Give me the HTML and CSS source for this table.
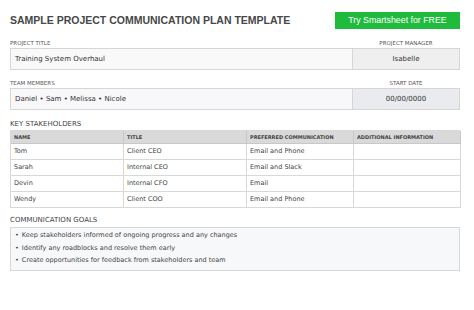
FILE: index.html
```html
<!DOCTYPE html>
<html>
<head>
<meta charset="utf-8">
<link rel="stylesheet" href="styles.css">
</head>
<body>
<div class="page">
  <div class="header">
    <h1 class="title">SAMPLE PROJECT COMMUNICATION PLAN TEMPLATE</h1>
    <div class="cta">Try Smartsheet for FREE</div>
  </div>

  <div class="info info-first">
    <div class="label">PROJECT TITLE</div>
    <div class="label label-right">PROJECT MANAGER</div>
    <div class="field field-left">Training System Overhaul</div>
    <div class="field field-right field-gray">Isabelle</div>
  </div>

  <div class="info">
    <div class="label">TEAM MEMBERS</div>
    <div class="label label-right">START DATE</div>
    <div class="field field-left field-soft">Daniel • Sam • Melissa • Nicole</div>
    <div class="field field-right field-blue">00/00/0000</div>
  </div>

  <div class="section-label">KEY STAKEHOLDERS</div>
  <div class="table">
    <div class="th">NAME</div><div class="th">TITLE</div><div class="th">PREFERRED COMMUNICATION</div><div class="th">ADDITIONAL INFORMATION</div>
    <div class="td">Tom</div><div class="td">Client CEO</div><div class="td">Email and Phone</div><div class="td"></div>
    <div class="td">Sarah</div><div class="td">Internal CEO</div><div class="td">Email and Slack</div><div class="td"></div>
    <div class="td">Devin</div><div class="td">Internal CFO</div><div class="td">Email</div><div class="td"></div>
    <div class="td">Wendy</div><div class="td">Client COO</div><div class="td">Email and Phone</div><div class="td"></div>
  </div>

  <div class="section-label goals-label">COMMUNICATION GOALS</div>
  <ul class="goals">
    <li>Keep stakeholders informed of ongoing progress and any changes</li>
    <li>Identify any roadblocks and resolve them early</li>
    <li>Create opportunities for feedback from stakeholders and team</li>
  </ul>
</div>
</body>
</html>
```

FILE: styles.css
```css
html, body {
  margin: 0;
  padding: 0;
  background: #ffffff;
}

.page {
  width: 450px;
  padding: 12px 0 0 10px;
  font-family: "DejaVu Sans", "Liberation Sans", sans-serif;
  color: #3a3a3a;
}

.header {
  display: flex;
  justify-content: space-between;
  align-items: center;
  height: 17px;
}

.title {
  margin: 0;
  font-family: "Liberation Sans", Arial, sans-serif;
  font-size: 10.5px;
  font-weight: bold;
  color: #474747;
  white-space: nowrap;
  line-height: 17px;
}

.cta {
  width: 125px;
  height: 17px;
  background: #1fbb3c;
  color: #ffffff;
  font-family: "Liberation Sans", Arial, sans-serif;
  font-size: 8.8px;
  line-height: 17px;
  text-align: center;
}

.info {
  display: grid;
  grid-template-columns: 342px 108px;
  grid-template-rows: 8px 22px;
  row-gap: 1px;
  margin-top: 9px;
}

.info-first {
  margin-top: 10px;
}

.label {
  font-size: 5.5px;
  color: #555;
  line-height: 8px;
  align-self: end;
}

.label-right {
  text-align: center;
}

.field {
  box-sizing: border-box;
  border: 1px solid #d6d6d6;
  font-size: 7px;
  line-height: 20px;
  color: #333;
  background: #f9f9f9;
}

.field-left {
  padding-left: 4px;
  border-right: none;
}

.field-right {
  text-align: center;
}

.field-gray {
  background: #efefef;
}

.field-soft {
  background: #f8f8fa;
}

.field-blue {
  background: #e9ebef;
}

.section-label {
  margin-top: 10px;
  font-size: 7px;
  line-height: 9px;
  color: #444;
}

.table {
  display: grid;
  grid-template-columns: 113px 123px 107px 107px;
  grid-template-rows: 13px repeat(4, 16px);
  margin-top: 1px;
  border-left: 1px solid #d8d8d8;
  border-top: 1px solid #d8d8d8;
}

.th, .td {
  box-sizing: border-box;
  border-right: 1px solid #d8d8d8;
  border-bottom: 1px solid #d8d8d8;
  padding-left: 3px;
  white-space: nowrap;
  overflow: hidden;
}

.th {
  background: #d9d9d9;
  font-size: 5px;
  font-weight: bold;
  color: #444;
  line-height: 12px;
  border-color: #c8c8c8;
}

.td {
  font-size: 6.5px;
  line-height: 15px;
  color: #444;
  background: #ffffff;
}

.goals-label {
  margin-top: 8px;
}

.goals {
  box-sizing: border-box;
  list-style: none;
  margin: 2px 0 0 0;
  padding: 1px 0 0 4px;
  height: 44px;
  border: 1px solid #d8d8d8;
  background: #f7f8fa;
  font-size: 6.5px;
  line-height: 12.5px;
  color: #444;
}

.goals li::before {
  content: "•";
  margin-right: 3px;
}
```
